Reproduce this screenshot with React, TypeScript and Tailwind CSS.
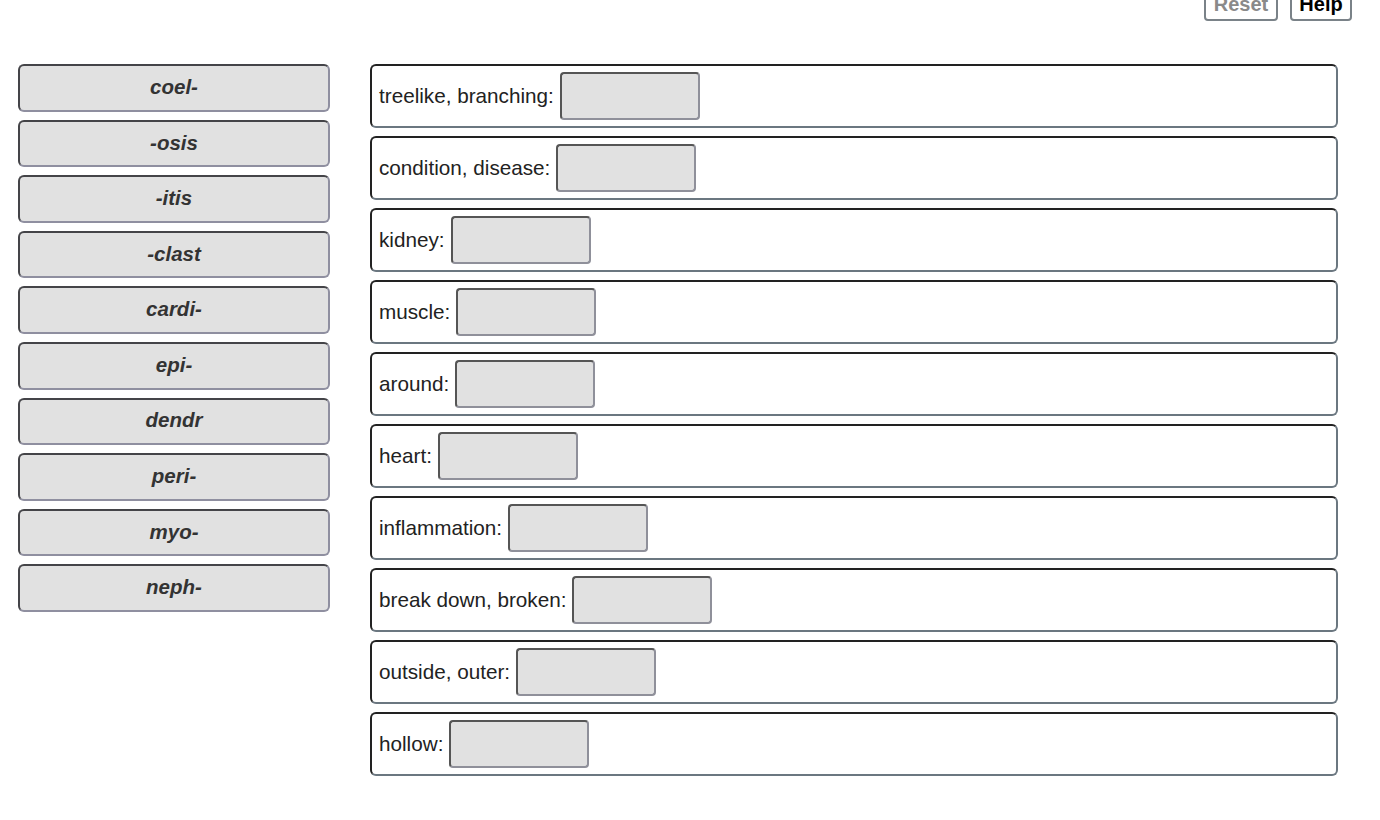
import React from "react";

const tiles = ["coel-", "-osis", "-itis", "-clast", "cardi-", "epi-", "dendr", "peri-", "myo-", "neph-"];
const rows: string[] = [
  "treelike, branching:",
  "condition, disease:",
  "kidney:",
  "muscle:",
  "around:",
  "heart:",
  "inflammation:",
  "break down, broken:",
  "outside, outer:",
  "hollow:",
];

export default function App() {
  return (
    <div
      className="w-[1380px] h-[820px] bg-white overflow-hidden relative"
      style={{ fontFamily: '"Liberation Sans", Arial, sans-serif' }}
    >
      <div className="flex justify-end gap-3 pr-[28px] -mt-[9px]">
        <div className="h-[30px] w-[74px] flex items-end justify-center pb-[5px] rounded-[4px] border-2 border-[#7a8288] text-[20px] font-bold text-[#8a8a8a] leading-none">
          Reset
        </div>
        <div className="h-[30px] w-[62px] flex items-end justify-center pb-[5px] rounded-[4px] border-2 border-[#7a8288] text-[20px] font-bold text-black leading-none">
          Help
        </div>
      </div>
      <div className="flex pl-[18px] pt-[43px] gap-[40px]">
        <div className="flex flex-col gap-2 w-[312px]">
          {tiles.map((t) => (
            <div
              key={t}
              className="h-[47.6px] flex items-center justify-center pb-[1px] rounded-[6px] border-2 border-t-[#444448] border-l-[#444448] border-b-[#8f8fa0] border-r-[#8f8fa0] bg-[#e1e1e1] text-[20.5px] font-bold italic text-[#333]"
            >
              {t}
            </div>
          ))}
        </div>
        <div className="flex flex-col gap-2 w-[968px]">
          {rows.map((label) => (
            <div
              key={label}
              className="h-[64px] flex items-center pl-[7px] rounded-[6px] border-2 border-t-[#222] border-l-[#222] border-b-[#6b7780] border-r-[#6b7780] bg-white"
            >
              <span className="text-[20.7px] text-[#222] mr-[6px]">{label}</span>
              <div className="w-[140px] h-[48px] rounded-[4px] border-2 border-t-[#555] border-l-[#555] border-b-[#8f909a] border-r-[#8f909a] bg-[#e1e1e1]" />
            </div>
          ))}
        </div>
      </div>
    </div>
  );
}
